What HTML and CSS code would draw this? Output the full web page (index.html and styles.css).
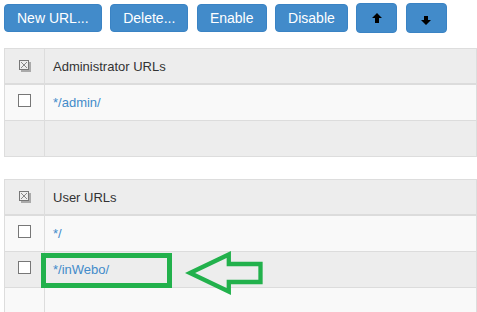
FILE: index.html
```html
<!DOCTYPE html>
<html>
<head>
<meta charset="utf-8">
<link rel="stylesheet" href="styles.css">
</head>
<body>
<div class="page">
  <div class="toolbar">
    <button class="btn">New URL...</button>
    <button class="btn">Delete...</button>
    <button class="btn">Enable</button>
    <button class="btn">Disable</button>
    <button class="btn btn-icon" title="Move up">
      <svg class="ico-up" width="10" height="10" viewBox="0 0 10 10"><polygon points="5,0 10,5 7,5 7,10 3,10 3,5 0,5" fill="#000"/></svg>
    </button>
    <button class="btn btn-icon" title="Move down">
      <svg class="ico-down" width="10" height="9" viewBox="0 0 10 9"><polygon points="3,0 7,0 7,4 10,4 5,9 0,4 3,4" fill="#000"/></svg>
    </button>
  </div>

  <table class="grid grid-admin">
    <thead>
      <tr>
        <th class="sel"><svg class="selall" width="12" height="12" viewBox="0 0 12 12"><rect x="0.5" y="0.5" width="9" height="9" fill="none" stroke="#777"/><path d="M2 2 L8 8 M8 2 L2 8" stroke="#888" stroke-width="1"/><path d="M2 11 H11 V2" fill="none" stroke="#aaa" stroke-width="2"/></svg></th>
        <th class="name">Administrator URLs</th>
      </tr>
    </thead>
    <tbody>
      <tr class="odd"><td class="sel"><span class="cb"></span></td><td class="name"><a href="#">*/admin/</a></td></tr>
      <tr class="even"><td class="sel"></td><td class="name"></td></tr>
    </tbody>
  </table>

  <table class="grid grid-user">
    <thead>
      <tr>
        <th class="sel"><svg class="selall" width="12" height="12" viewBox="0 0 12 12"><rect x="0.5" y="0.5" width="9" height="9" fill="none" stroke="#777"/><path d="M2 2 L8 8 M8 2 L2 8" stroke="#888" stroke-width="1"/><path d="M2 11 H11 V2" fill="none" stroke="#aaa" stroke-width="2"/></svg></th>
        <th class="name">User URLs</th>
      </tr>
    </thead>
    <tbody>
      <tr class="odd"><td class="sel"><span class="cb"></span></td><td class="name"><a href="#">*/</a></td></tr>
      <tr class="even"><td class="sel"><span class="cb"></span></td><td class="name"><a href="#">*/inWebo/</a></td></tr>
      <tr class="odd"><td class="sel"></td><td class="name"></td></tr>
    </tbody>
  </table>

  <div class="highlight"></div>
  <svg class="callout" width="90" height="55" viewBox="0 0 90 55">
    <polygon points="10,28 48.8,9.5 48.8,19 80.5,19 80.5,37 48.8,37 48.8,46.5" fill="none" stroke="#22b14c" stroke-width="4.3" stroke-linejoin="miter" stroke-miterlimit="3"/>
  </svg>
</div>
</body>
</html>
```

FILE: styles.css
```css
html, body {
  margin: 0;
  padding: 0;
  background: #fff;
}

.page {
  position: relative;
  padding: 3px 0 0 4px;
  font-family: "Liberation Sans", Arial, sans-serif;
  color: #333;
  height: 309px;
  overflow: hidden;
}

.toolbar {
  display: flex;
  align-items: center;
  gap: 8.6px;
  height: 30px;
  margin-bottom: 15px;
}

.btn {
  box-sizing: border-box;
  height: 28px;
  padding: 0 12px;
  border: 1px solid #3a83c4;
  border-radius: 4px;
  background: #428bca;
  color: #fff;
  font-family: "Liberation Sans", Arial, sans-serif;
  font-size: 14px;
  line-height: 26px;
  cursor: pointer;
}

.btn-icon {
  width: 41px;
  height: 30px;
  padding: 0;
  display: flex;
  align-items: center;
  justify-content: center;
}

.ico-up {
  display: block;
  margin-top: -1px;
}

.ico-down {
  display: block;
  margin-top: 5px;
}

.grid {
  width: 473px;
  border-collapse: separate;
  border-spacing: 0;
  border: 1px solid #ddd;
  table-layout: fixed;
  font-size: 13px;
}

.grid-admin {
  margin-bottom: 22px;
}

.grid th,
.grid td {
  box-sizing: border-box;
  padding: 0;
  vertical-align: middle;
  text-align: left;
  font-weight: normal;
}

.grid th {
  height: 35px;
  background: #ededed;
  border-bottom: 1px solid #dcdcdc;
  color: #333;
}

.grid td {
  height: 36px;
  border-top: 1px solid #dcdcdc;
}

.grid .sel {
  width: 40px;
  border-right: 1px solid #ddd;
  text-align: center;
}

.grid .name {
  padding-left: 8px;
}

.grid tr.odd td {
  background: #f9f9f9;
}

.grid tr.even td {
  background: #ededed;
}

.selall {
  display: block;
  margin: 0 auto;
}

.cb {
  display: block;
  box-sizing: border-box;
  width: 13px;
  height: 13px;
  margin: -4px auto 0;
  border: 1px solid #777;
  background: #fff;
}

.grid a {
  color: #428bca;
  text-decoration: none;
}

.highlight {
  position: absolute;
  left: 41px;
  top: 253px;
  width: 131px;
  height: 35px;
  box-sizing: border-box;
  border: 5px solid #22b14c;
}

.callout {
  position: absolute;
  left: 180px;
  top: 245px;
}
```
